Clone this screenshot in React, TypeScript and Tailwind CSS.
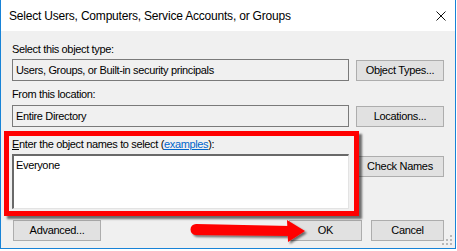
const ui = { fontFamily: '"Liberation Sans", Arial, sans-serif' };

function Button({ label, className = '' }: { label: string; className?: string }) {
    return (
        <div
            className={`h-[21px] flex items-center justify-center bg-[#e1e1e1] border border-[#adadad] text-[11px] tracking-[-0.3px] text-black ${className}`}
        >
            {label}
        </div>
    );
}

function ReadOnlyBox({ value }: { value: string }) {
    return (
        <div className="w-[337px] h-[22px] flex items-center px-[3px] border border-[#7a7a7a] bg-[#f0f0f0] text-[11px] text-black">
            {value}
        </div>
    );
}

function Grip() {
    return (
        <svg className="absolute right-[3px] bottom-[3px]" width="10" height="10" viewBox="0 0 10 10">
            <rect x="8" y="0" width="2" height="2" fill="#b8b8b8" />
            <rect x="4" y="4" width="2" height="2" fill="#b8b8b8" />
            <rect x="8" y="4" width="2" height="2" fill="#b8b8b8" />
            <rect x="0" y="8" width="2" height="2" fill="#b8b8b8" />
            <rect x="4" y="8" width="2" height="2" fill="#b8b8b8" />
            <rect x="8" y="8" width="2" height="2" fill="#b8b8b8" />
        </svg>
    );
}

export default function App() {
    return (
        <div className="w-[457px] h-[251px] bg-white" style={ui}>
            <div className="relative w-[456px] h-[249px] flex flex-col border-x border-b border-[#1883d7] bg-[#f0f0f0]">
                {/* title bar */}
                <div className="h-[31px] shrink-0 bg-white flex items-center justify-between pl-[8px] pr-[9px]">
                    <span className="text-[12px] tracking-[-0.2px] text-black leading-none">
                        Select Users, Computers, Service Accounts, or Groups
                    </span>
                    <svg width="10" height="10" viewBox="0 0 10 10">
                        <path d="M0.5 0.5 L9.5 9.5 M9.5 0.5 L0.5 9.5" stroke="#111" strokeWidth="1" />
                    </svg>
                </div>

                <div className="flex flex-col px-[11px] text-[11px] tracking-[-0.35px] text-black">
                    <div className="mt-[12px] h-[13px] leading-[13px]">Select this object type:</div>
                    <div className="mt-[3px] flex items-center gap-[7px]">
                        <ReadOnlyBox value="Users, Groups, or Built-in security principals" />
                        <Button label="Object Types..." className="w-[88px]" />
                    </div>

                    <div className="mt-[7px] h-[13px] leading-[13px]">From this location:</div>
                    <div className="mt-[4px] flex items-center gap-[7px]">
                        <ReadOnlyBox value="Entire Directory" />
                        <Button label="Locations..." className="w-[88px]" />
                    </div>

                    <div className="mt-[11px] h-[13px] leading-[13px]">
                        <span className="underline">E</span>nter the object names to select (
                        <span className="text-[#0066cc] underline">examples</span>):
                    </div>
                    <div className="mt-[3px] flex items-start gap-[7px]">
                        <div className="w-[337px] h-[55px] bg-white border-t-2 border-l-2 border-t-[#696969] border-l-[#696969] border-r border-b border-r-[#e3e3e3] border-b-[#e3e3e3] px-[2px] pt-[3px] leading-[13px]">
                            Everyone
                        </div>
                        <Button label="Check Names" className="w-[88px] mt-[2px]" />
                    </div>

                    <div className="mt-[11px] flex items-center justify-between">
                        <Button label="Advanced..." className="w-[88px] ml-[1px]" />
                        <div className="flex gap-[9px]">
                            <Button label="OK" className="w-[73px]" />
                            <Button label="Cancel" className="w-[73px]" />
                        </div>
                    </div>
                </div>

                {/* annotation: red highlight box */}
                <div className="absolute left-[3px] top-[131px] w-[355px] h-[85px] border-[5px] border-[#ff0000] shadow-[3px_3px_2px_rgba(0,0,0,0.55)]" />

                {/* annotation: red arrow */}
                <svg className="absolute left-[184px] top-[216px]" width="130" height="32" viewBox="184 216 130 32">
                    <defs>
                        <filter id="arrowShadow" x="-10%" y="-30%" width="130%" height="180%">
                            <feDropShadow dx="2" dy="2" stdDeviation="1.2" floodColor="#000" floodOpacity="0.55" />
                        </filter>
                    </defs>
                    <g filter="url(#arrowShadow)" fill="#ff0000">
                        <path d="M195 224 L289 226 L289 236 L195 235 A5.5 5.5 0 0 1 195 224 Z" />
                        <path d="M286 220 L304 231 L287 242 Z" />
                    </g>
                </svg>

                <Grip />
            </div>
        </div>
    );
}
